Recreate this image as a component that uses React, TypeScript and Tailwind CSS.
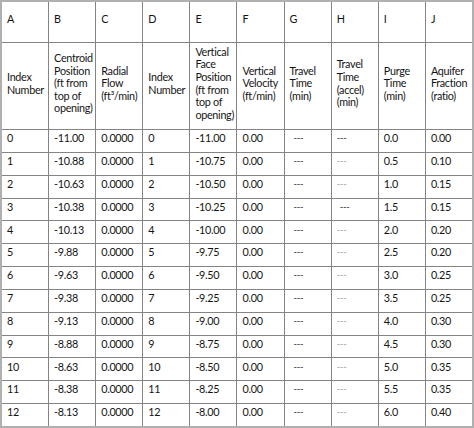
const letters = ["A", "B", "C", "D", "E", "F", "G", "H", "I", "J"];

const headers = [
  "Index\nNumber",
  "Centroid\nPosition\n(ft from\ntop of\nopening)",
  "Radial\nFlow\n(ft³/min)",
  "Index\nNumber",
  "Vertical\nFace\nPosition\n(ft from\ntop of\nopening)",
  "Vertical\nVelocity\n(ft/min)",
  "Travel\nTime\n(min)",
  "Travel\nTime\n(accel)\n(min)",
  "Purge\nTime\n(min)",
  "Aquifer\nFraction\n(ratio)",
];

const centroid = ["-11.00", "-10.88", "-10.63", "-10.38", "-10.13", "-9.88", "-9.63", "-9.38", "-9.13", "-8.88", "-8.63", "-8.38", "-8.13"];
const face = ["-11.00", "-10.75", "-10.50", "-10.25", "-10.00", "-9.75", "-9.50", "-9.25", "-9.00", "-8.75", "-8.50", "-8.25", "-8.00"];
const purge = ["0.0", "0.5", "1.0", "1.5", "2.0", "2.5", "3.0", "3.5", "4.0", "4.5", "5.0", "5.5", "6.0"];
const fraction = ["0.00", "0.10", "0.15", "0.15", "0.20", "0.20", "0.25", "0.25", "0.30", "0.30", "0.35", "0.35", "0.40"];

function Cell({ children, className = "" }: { children?: React.ReactNode; className?: string }) {
  return (
    <div className={`bg-white flex items-center pl-[5px] pb-[5px] text-[10.8px] leading-[12.6px] tracking-[-0.3px] text-[#141414] whitespace-pre-line ${className}`}>
      {children}
    </div>
  );
}

export default function App() {
  return (
    <div className="w-[474px] h-[428px] bg-white border-2 border-[#b0b0b0] font-['Lato',sans-serif]">
      <div className="grid grid-cols-10 grid-rows-[40px_86px_repeat(13,1fr)] gap-px bg-[#848484] h-full">
        {letters.map((l) => (
          <Cell key={l}>{l}</Cell>
        ))}
        {headers.map((h, i) => (
          <Cell key={i}>{h}</Cell>
        ))}
        {centroid.map((c, i) => (
          <div key={i} className="contents">
            <Cell>{i}</Cell>
            <Cell>{c}</Cell>
            <Cell>0.0000</Cell>
            <Cell>{i}</Cell>
            <Cell>{face[i]}</Cell>
            <Cell>0.00</Cell>
            <Cell className="pl-[9px]">
              <span className="text-[9.5px] text-[#2a2a2a]">---</span>
            </Cell>
            <Cell className={i === 3 ? "pl-[8px]" : ""}>
              <span className={`text-[9.5px] ${i === 0 || i === 3 ? "text-[#2a2a2a]" : "text-[#a0a0a0]"}`}>---</span>
            </Cell>
            <Cell>{purge[i]}</Cell>
            <Cell>{fraction[i]}</Cell>
          </div>
        ))}
      </div>
    </div>
  );
}
